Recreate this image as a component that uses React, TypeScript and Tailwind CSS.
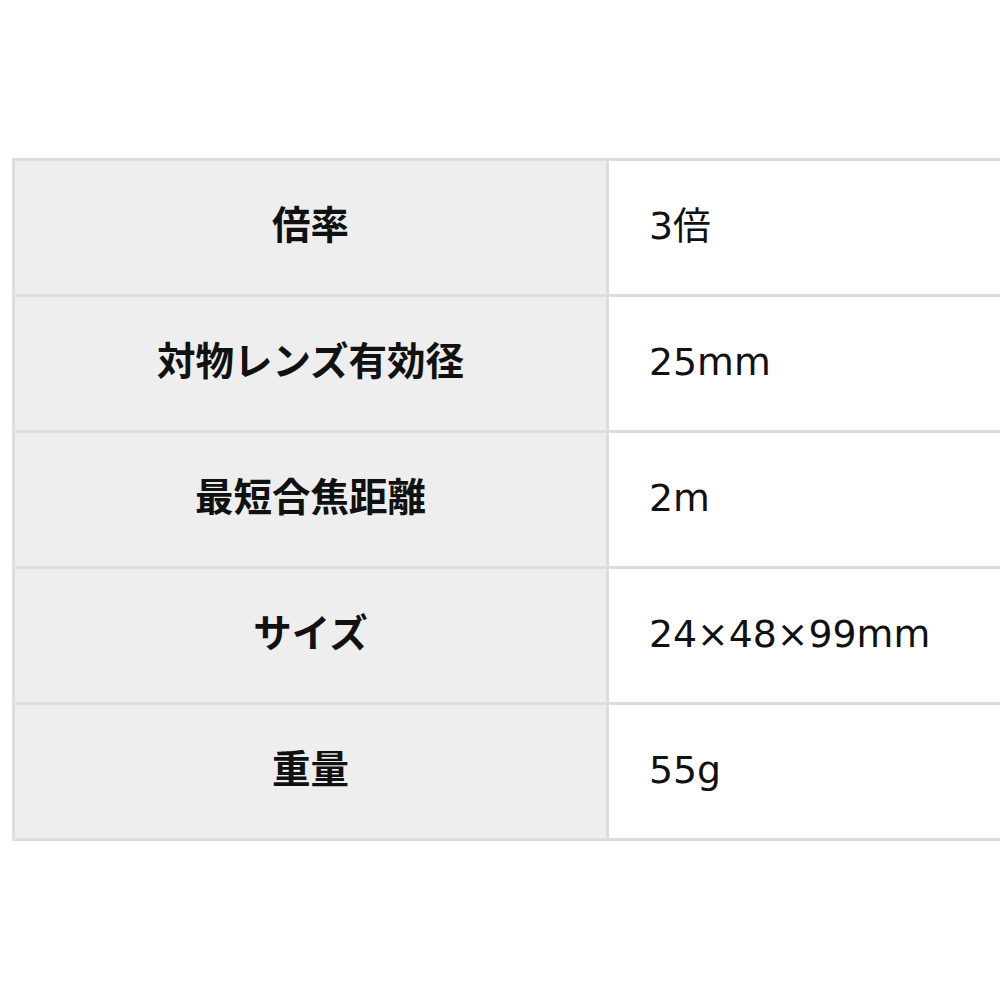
import React from "react";

const rows: [string, string][] = [
  ["倍率", "3倍"],
  ["対物レンズ有効径", "25mm"],
  ["最短合焦距離", "2m"],
  ["サイズ", "24×48×99mm"],
  ["重量", "55g"],
];

export default function App() {
  return (
    <div className="w-[1000px] h-[1000px] overflow-hidden bg-white" style={{ fontFamily: '"Noto Sans CJK JP", sans-serif' }}>
      <div className="pt-[158px] pl-[12px]">
        <table className="w-[1194px] border-collapse border-[3px] border-[#dddddd] text-[#111111]">
          <tbody>
            {rows.map(([k, v]) => (
              <tr key={k} className="h-[136px]">
                <th className="w-[594px] border-[3px] border-[#dddddd] bg-[#eeeeee] pb-[10px] text-center text-[38.5px] font-bold">{k}</th>
                <td
                  className="border-[3px] border-[#dddddd] bg-white pl-[40px] pb-[3px] text-[37.8px] font-normal"
                  style={{ fontFamily: '"DejaVu Sans", "Noto Sans CJK JP", sans-serif' }}
                >
                  {v}
                </td>
              </tr>
            ))}
          </tbody>
        </table>
      </div>
    </div>
  );
}
